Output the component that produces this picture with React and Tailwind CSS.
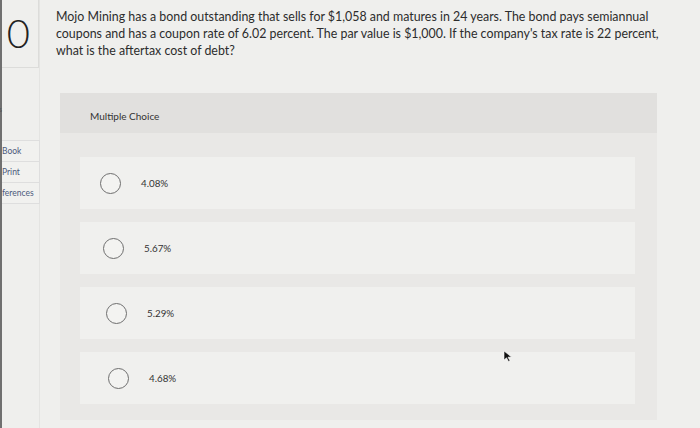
import React from "react";

const options = [
  { label: "4.08%", pl: "pl-[20px]" },
  { label: "5.67%", pl: "pl-[23px]" },
  { label: "5.29%", pl: "pl-[26px]" },
  { label: "4.68%", pl: "pl-[28px]" },
];

export default function App() {
  return (
    <div
      className="relative flex w-[700px] h-[428px] overflow-hidden bg-[#efefed] text-[#2f2f2f]"
      style={{ fontFamily: "Lato, 'Open Sans', Arial, sans-serif" }}
    >
      <div className="w-[2px] shrink-0 bg-[#707070]" />
      <div className="w-[38px] shrink-0 flex flex-col border-r border-[#e4e4e2]">
        <div className="h-[68px] border-b border-r border-[#dcdcda] flex items-center justify-end overflow-hidden pr-[8px]">
          <span className="text-[40px] font-light leading-none text-[#222] mt-[-2px]">0</span>
        </div>
        <div className="h-[72px] pt-[38px] text-[7px] leading-none text-[#555] ml-[-3px]">s</div>
        <div className="flex flex-col w-[38px]">
          {["Book", "Print", "ferences"].map((t) => (
            <div
              key={t}
              className="h-[22px] flex items-center border border-l-0 border-[#dedede] -mt-px first:mt-0 bg-[#f1f1ef] text-[8.5px] text-[#4d5a7c] whitespace-nowrap overflow-hidden"
            >
              {t}
            </div>
          ))}
        </div>
      </div>
      <div className="flex-1 flex flex-col">
        <p className="pl-[16px] pt-[8px] whitespace-nowrap text-[12.4px] leading-[17px] text-[#2c2c2c]">
          Mojo Mining has a bond outstanding that sells for $1,058 and matures in 24 years. The bond pays semiannual
          <br />
          coupons and has a coupon rate of 6.02 percent. The par value is $1,000. If the company's tax rate is 22 percent,
          <br />
          what is the aftertax cost of debt?
        </p>
        <div className="ml-[20px] mt-[34px] w-[597px] h-[327px] bg-[#e9e8e6] flex flex-col">
          <div className="h-[40px] shrink-0 bg-[#e1e0de] flex items-center pl-[30px] pt-[7px] text-[10px] text-[#333]">
            Multiple Choice
          </div>
          <div className="flex flex-col gap-[13px] pt-[24px] pl-[20px] pr-[22px]">
            {options.map((o) => (
              <div key={o.label} className={`h-[52px] bg-[#f0f0ee] flex items-center ${o.pl}`}>
                <div className="w-[21px] h-[21px] rounded-full border-[1.5px] border-[#6e6e6e] bg-[#f3f3f1]" />
                <span className="ml-[20px] text-[9.8px] text-[#333]">{o.label}</span>
              </div>
            ))}
          </div>
        </div>
      </div>
      <svg className="absolute left-[503px] top-[350px]" width="10" height="12" viewBox="0 0 10 12">
        <path d="M1 1 L1 10 L3.5 7.8 L5.5 11.5 L7 10.8 L5 7.2 L8.5 7 Z" fill="#111" stroke="#fff" strokeWidth="0.6" />
      </svg>
    </div>
  );
}
